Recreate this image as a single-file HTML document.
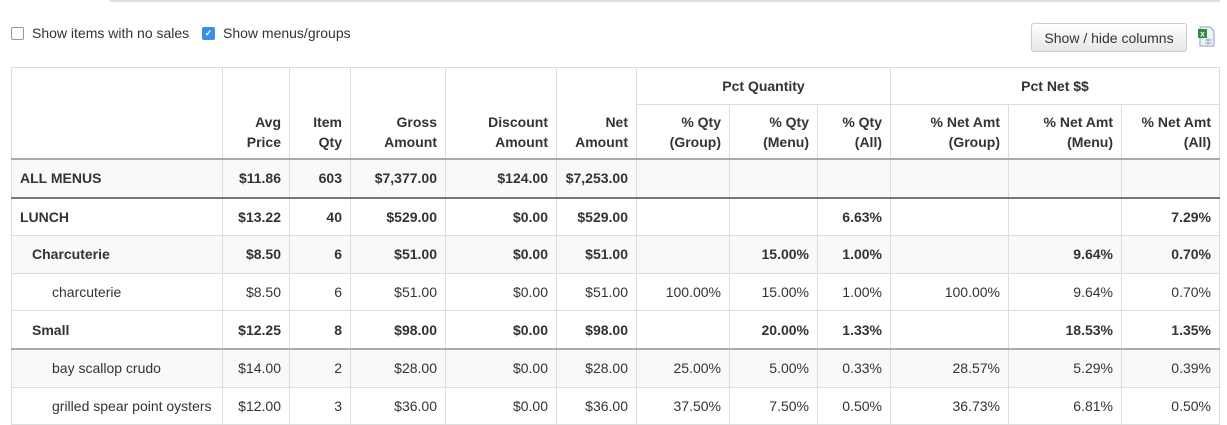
<!DOCTYPE html>
<html><head><meta charset="utf-8"><style>
body{margin:0;width:1227px;height:425px;overflow:hidden;background:#fff;font-family:"Liberation Sans",Arial,sans-serif;color:#333;font-size:14px;position:relative}
.topline{position:absolute;left:110px;top:0;width:1110px;height:2px;background:#ddd}
.cb{position:absolute;top:25px;font-size:14px;display:flex;align-items:center}
.box{width:11px;height:11px;border:1px solid #999;border-radius:2px;margin-right:8px;background:#fff}
.box.on{background:#3b8fe8;border-color:#3b8fe8;color:#fff;font-size:9px;line-height:11px;text-align:center;font-weight:bold}
.btn{position:absolute;left:1031px;top:23px;width:156px;height:29px;border:1px solid #ccc;border-radius:3px;background:linear-gradient(#fff,#e6e6e6);font-size:14px;text-align:center;line-height:29px;box-sizing:border-box}
.xl{position:absolute;left:1197px;top:26px;width:18px;height:21px}
table{position:absolute;left:11px;top:67px;border-collapse:collapse;table-layout:fixed;width:1208px}
td,th{border:1px solid #ddd;padding:0 8px;text-align:right;white-space:nowrap;overflow:hidden}
th{font-weight:bold;line-height:20px}
tr.g th{height:36px;text-align:center}
tr.h th{height:47px;vertical-align:bottom;padding-bottom:6px;border-bottom:2px solid #aaa}
td{height:36.6px}
.s{background:#f9f9f9}
.b td{font-weight:bold}
td:first-child{text-align:left}
.l1{padding-left:20px}.l2{padding-left:40px}
tr.all td{border-bottom:2px solid #777}
tr.sm td{border-bottom:2px solid #aaa}
tr.g th.rh{vertical-align:bottom;padding-bottom:6px;border-bottom:2px solid #aaa;text-align:right}
</style></head><body>
<div class="topline"></div>
<div class="cb" style="left:11px"><div class="box"></div>Show items with no sales</div>
<div class="cb" style="left:202px"><div class="box on">✓</div>Show menus/groups</div>
<div class="btn">Show / hide columns</div>
<svg class="xl" viewBox="0 0 18 21"><path d="M3 1h10l4 4v15H3z" fill="#eef3fa" stroke="#8aa2c0"/><rect x="1" y="3" width="9" height="9" fill="#2f8a3a"/><text x="5.5" y="10.5" font-size="8" fill="#fff" text-anchor="middle" font-family="Liberation Sans" font-weight="bold">x</text><path d="M8 14h7M8 17h7M11 12v7" stroke="#9ab" stroke-width="1"/></svg>
<table>
<colgroup><col style="width:211px"><col style="width:67px"><col style="width:61px"><col style="width:95px"><col style="width:111px"><col style="width:80px"><col style="width:93px"><col style="width:88px"><col style="width:73px"><col style="width:118px"><col style="width:113px"><col style="width:98px"></colgroup>
<tr class="g"><th rowspan="2" style="border-bottom:2px solid #aaa"></th><th rowspan="2" class="rh">Avg<br>Price</th><th rowspan="2" class="rh">Item<br>Qty</th><th rowspan="2" class="rh">Gross<br>Amount</th><th rowspan="2" class="rh">Discount<br>Amount</th><th rowspan="2" class="rh">Net<br>Amount</th><th colspan="3">Pct Quantity</th><th colspan="3">Pct Net $$</th></tr>
<tr class="h"><th>% Qty<br>(Group)</th><th>% Qty<br>(Menu)</th><th>% Qty<br>(All)</th><th>% Net Amt<br>(Group)</th><th>% Net Amt<br>(Menu)</th><th>% Net Amt<br>(All)</th></tr>
<tr class="s b all"><td>ALL MENUS</td><td>$11.86</td><td>603</td><td>$7,377.00</td><td>$124.00</td><td>$7,253.00</td><td></td><td></td><td></td><td></td><td></td><td></td></tr>
<tr class="b"><td>LUNCH</td><td>$13.22</td><td>40</td><td>$529.00</td><td>$0.00</td><td>$529.00</td><td></td><td></td><td>6.63%</td><td></td><td></td><td>7.29%</td></tr>
<tr class="s b"><td class="l1">Charcuterie</td><td>$8.50</td><td>6</td><td>$51.00</td><td>$0.00</td><td>$51.00</td><td></td><td>15.00%</td><td>1.00%</td><td></td><td>9.64%</td><td>0.70%</td></tr>
<tr><td class="l2">charcuterie</td><td>$8.50</td><td>6</td><td>$51.00</td><td>$0.00</td><td>$51.00</td><td>100.00%</td><td>15.00%</td><td>1.00%</td><td>100.00%</td><td>9.64%</td><td>0.70%</td></tr>
<tr class="b sm"><td class="l1">Small</td><td>$12.25</td><td>8</td><td>$98.00</td><td>$0.00</td><td>$98.00</td><td></td><td>20.00%</td><td>1.33%</td><td></td><td>18.53%</td><td>1.35%</td></tr>
<tr class="s"><td class="l2">bay scallop crudo</td><td>$14.00</td><td>2</td><td>$28.00</td><td>$0.00</td><td>$28.00</td><td>25.00%</td><td>5.00%</td><td>0.33%</td><td>28.57%</td><td>5.29%</td><td>0.39%</td></tr>
<tr><td class="l2">grilled spear point oysters</td><td>$12.00</td><td>3</td><td>$36.00</td><td>$0.00</td><td>$36.00</td><td>37.50%</td><td>7.50%</td><td>0.50%</td><td>36.73%</td><td>6.81%</td><td>0.50%</td></tr>
</table>
</body></html>
